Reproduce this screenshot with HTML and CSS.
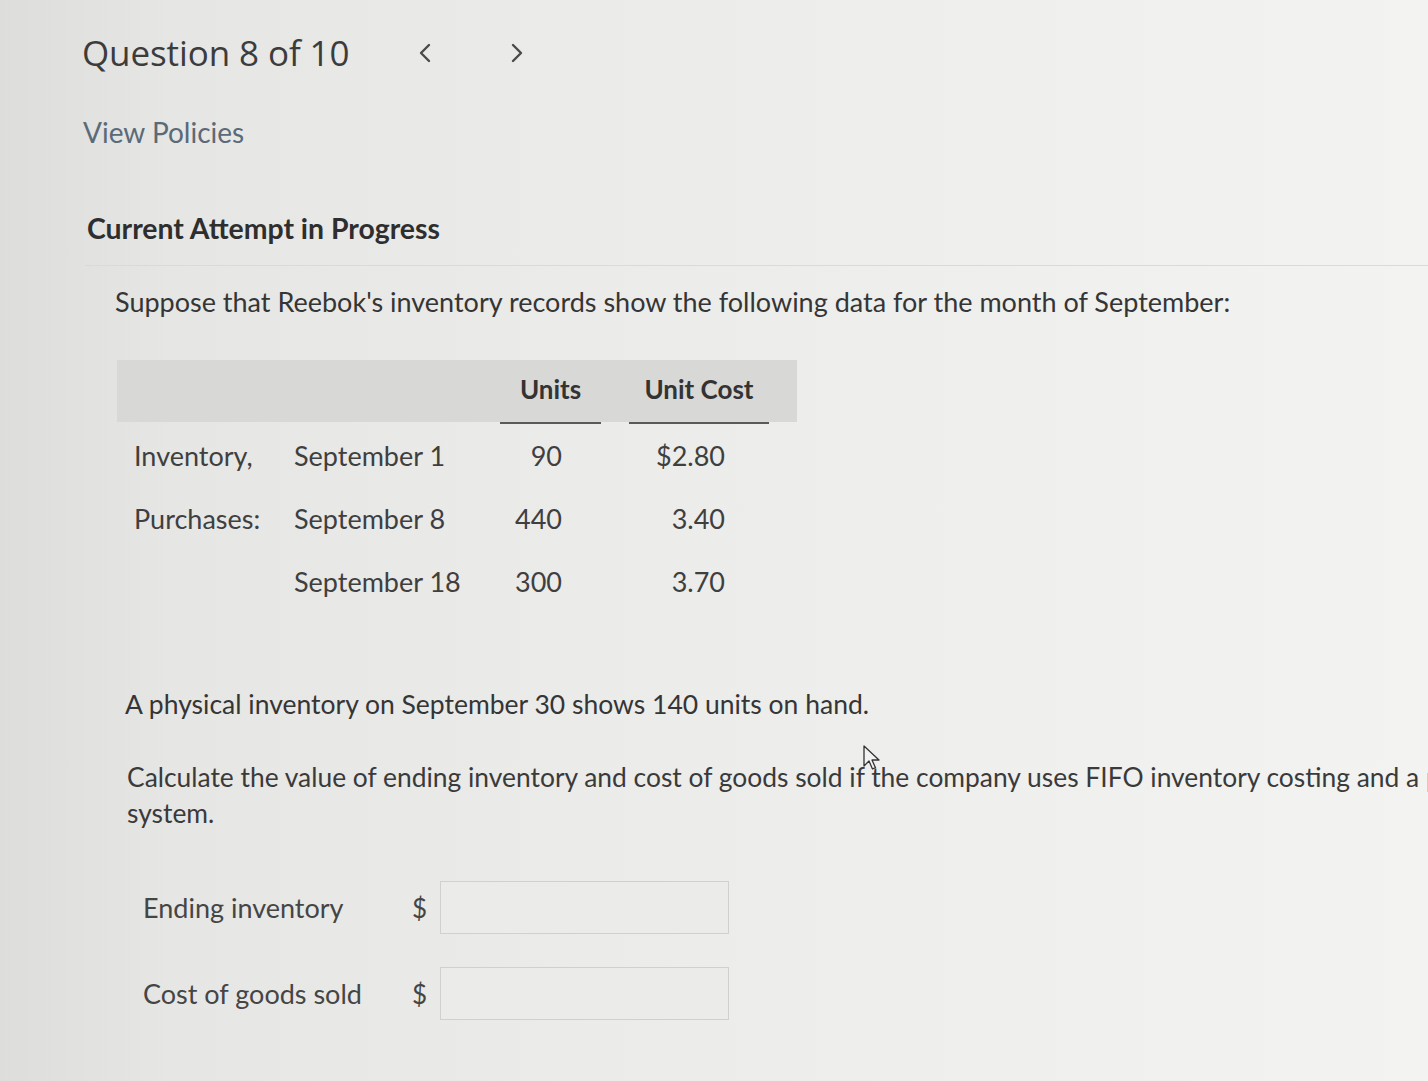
FILE: index.html
```html
<!DOCTYPE html>
<html>
<head>
<meta charset="utf-8">
<link rel="stylesheet" href="styles.css">
</head>
<body>
<div class="page">
  <div class="qhead">
    <span class="qtitle">Question 8 of 10</span>
    <span class="nav">
      <svg class="chev" width="16" height="22" viewBox="0 0 16 22"><polyline points="12,3 4,11 12,19" fill="none" stroke="#4a4a4a" stroke-width="2.4" stroke-linecap="round" stroke-linejoin="round"/></svg>
      <svg class="chev next" width="16" height="22" viewBox="0 0 16 22"><polyline points="4,3 12,11 4,19" fill="none" stroke="#4a4a4a" stroke-width="2.4" stroke-linecap="round" stroke-linejoin="round"/></svg>
    </span>
  </div>
  <a class="policies">View Policies</a>
  <div class="attempt">Current Attempt in Progress</div>
  <div class="divider"></div>
  <div class="question">
    <p class="intro">Suppose that Reebok's inventory records show the following data for the month of September:</p>
    <div class="tbl">
      <div class="th"></div>
      <div class="th"></div>
      <div class="th ul">Units</div>
      <div class="th"></div>
      <div class="th ul">Unit Cost</div>
      <div class="th"></div>

      <div class="td l1">Inventory,</div>
      <div class="td l2">September 1</div>
      <div class="td num u">90</div>
      <div class="td"></div>
      <div class="td num c">$2.80</div>
      <div class="td"></div>

      <div class="td l1">Purchases:</div>
      <div class="td l2">September 8</div>
      <div class="td num u">440</div>
      <div class="td"></div>
      <div class="td num c">3.40</div>
      <div class="td"></div>

      <div class="td l1"></div>
      <div class="td l2">September 18</div>
      <div class="td num u">300</div>
      <div class="td"></div>
      <div class="td num c">3.70</div>
      <div class="td"></div>
    </div>
    <p class="phys">A physical inventory on September 30 shows 140 units on hand.</p>
    <p class="calc">Calculate the value of ending inventory and cost of goods sold if the company uses FIFO inventory costing and a periodic inventory system.</p>
    <div class="answers">
      <div class="arow first">
        <span class="alabel">Ending inventory</span>
        <span class="dollar">$</span>
        <span class="abox"></span>
      </div>
      <div class="arow second">
        <span class="alabel">Cost of goods sold</span>
        <span class="dollar">$</span>
        <span class="abox"></span>
      </div>
    </div>
  </div>
</div>
<svg class="cursor" width="20" height="28" viewBox="0 0 20 28"><path d="M2,2 L2,22 L7,17 L10.5,25 L13.5,23.7 L10,16 L17,16 Z" fill="#f2f2f2" stroke="#333" stroke-width="1.3" stroke-linejoin="round"/></svg>
</body>
</html>
```

FILE: styles.css
```css
html, body {
  margin: 0;
  padding: 0;
}
body {
  width: 1428px;
  height: 1081px;
  overflow: hidden;
  position: relative;
  background: linear-gradient(90deg, #dddddb 0%, #e6e6e4 12%, #ebebea 40%, #efefee 70%, #f3f3f2 100%);
  font-family: Lato, "Open Sans", sans-serif;
  color: #3a3a3a;
}
.page {
  padding: 32px 0 0 82px;
  width: 1700px;
}
.qhead {
  display: flex;
  align-items: center;
  height: 42px;
}
.qtitle {
  font-family: "Open Sans", sans-serif;
  font-size: 35px;
  line-height: 42px;
  color: #3c3c3c;
  letter-spacing: -0.1px;
}
.nav {
  display: flex;
  align-items: center;
  margin-left: 68px;
  gap: 76px;
}
.chev {
  display: block;
}
.policies {
  display: block;
  margin-top: 42px;
  font-size: 28px;
  line-height: 32px;
  color: #5a6a78;
  margin-left: 1px;
}
.attempt {
  margin-top: 64px;
  margin-left: 5px;
  font-size: 28.4px;
  line-height: 32px;
  font-weight: 700;
  color: #2e2e2e;
}
.divider {
  margin-top: 21px;
  margin-left: 3px;
  height: 1px;
  background: #dadad8;
}
.question {
  padding-left: 33px;
}
.intro {
  margin: 20px 0 0 0;
  font-size: 27px;
  line-height: 32px;
  color: #353535;
}
.tbl {
  margin-top: 42px;
  margin-left: 2px;
  display: grid;
  grid-template-columns: 175px 208px 101px 28px 140px 28px;
  grid-auto-rows: 63px;
  grid-template-rows: 64px;
  width: 680px;
  font-size: 27px;
  color: #3f3f3f;
}
.th {
  background: #d8d8d6;
  height: 62px;
  box-sizing: border-box;
  display: flex;
  align-items: center;
  justify-content: center;
  font-weight: 700;
  color: #333;
  font-size: 26px;
}
.th.ul {
  height: 64px;
  border-bottom: 2px solid #5a5a5a;
  padding-bottom: 4px;
}
.td {
  display: flex;
  align-items: center;
}
.l1 {
  padding-left: 17px;
}
.l2 {
  padding-left: 2px;
}
.num {
  justify-content: flex-end;
}
.num.u {
  padding-right: 39px;
}
.num.c {
  padding-right: 44px;
}
.phys {
  margin: 73px 0 0 10px;
  font-size: 26.5px;
  line-height: 36px;
  color: #353535;
}
.calc {
  margin: 37px 0 0 12px;
  width: 1560px;
  font-size: 26.4px;
  line-height: 36px;
  color: #3a3a3a;
}
.answers {
  margin-left: 28px;
}
.arow {
  display: flex;
  align-items: center;
}
.arow.first {
  margin-top: 50px;
}
.arow.second {
  margin-top: 33px;
}
.alabel {
  width: 269px;
  font-size: 27px;
  color: #454545;
}
.dollar {
  width: 28px;
  font-size: 26px;
  color: #454545;
}
.abox {
  width: 289px;
  height: 53px;
  box-sizing: border-box;
  border: 1.5px solid #d0d0ce;
  background: #ebebea;
}
.cursor {
  position: absolute;
  left: 862px;
  top: 744px;
}
```
